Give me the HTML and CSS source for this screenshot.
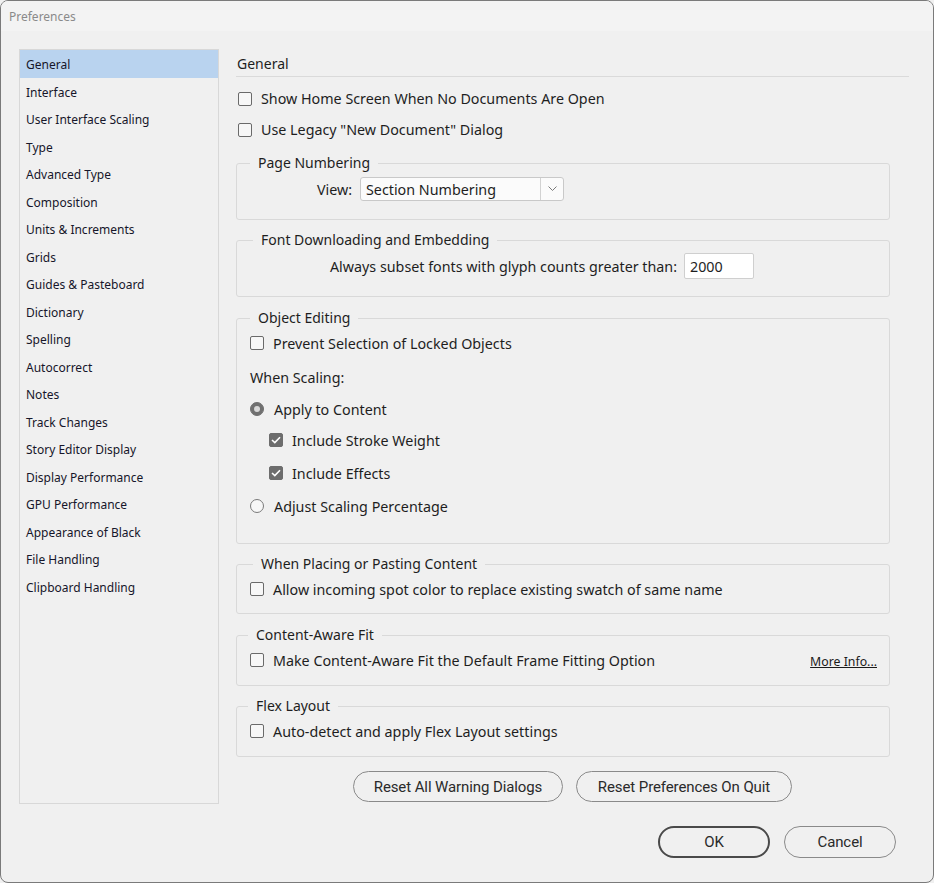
FILE: index.html
```html
<!DOCTYPE html>
<html lang="en">
<head>
<meta charset="utf-8">
<title>Preferences</title>
<link rel="stylesheet" href="styles.css">
</head>
<body>
<div class="window">
  <div class="titlebar"><span class="title">Preferences</span></div>
  <div class="body">
    <div class="content">
      <ul class="sidebar">
        <li class="item selected">General</li>
        <li class="item">Interface</li>
        <li class="item">User Interface Scaling</li>
        <li class="item">Type</li>
        <li class="item">Advanced Type</li>
        <li class="item">Composition</li>
        <li class="item">Units &amp; Increments</li>
        <li class="item">Grids</li>
        <li class="item">Guides &amp; Pasteboard</li>
        <li class="item">Dictionary</li>
        <li class="item">Spelling</li>
        <li class="item">Autocorrect</li>
        <li class="item">Notes</li>
        <li class="item">Track Changes</li>
        <li class="item">Story Editor Display</li>
        <li class="item">Display Performance</li>
        <li class="item">GPU Performance</li>
        <li class="item">Appearance of Black</li>
        <li class="item">File Handling</li>
        <li class="item">Clipboard Handling</li>
      </ul>
      <div class="main">
        <div class="heading">General</div>
        <div class="row top-row first"><span class="cb"></span><span>Show Home Screen When No Documents Are Open</span></div>
        <div class="row top-row"><span class="cb"></span><span>Use Legacy "New Document" Dialog</span></div>

        <fieldset class="group group-page">
          <legend>Page Numbering</legend>
          <div class="field-row">
            <span class="field-label label-view">View:</span>
            <div class="select">
              <span class="select-text">Section Numbering</span>
              <span class="select-btn">
                <svg width="9" height="6" viewBox="0 0 9 6"><polyline points="0.5,0.5 4.5,4.5 8.5,0.5" fill="none" stroke="#7a7a7a" stroke-width="1"/></svg>
              </span>
            </div>
          </div>
        </fieldset>

        <fieldset class="group group-font">
          <legend class="legend-shift">Font Downloading and Embedding</legend>
          <div class="field-row">
            <span class="field-label label-glyph">Always subset fonts with glyph counts greater than:</span>
            <div class="textbox">2000</div>
          </div>
        </fieldset>

        <fieldset class="group group-object">
          <legend>Object Editing</legend>
          <div class="row h30"><span class="cb"></span><span>Prevent Selection of Locked Objects</span></div>
          <div class="row h38 plain">When Scaling:</div>
          <div class="row h26 radio-row"><span class="radio on"></span><span>Apply to Content</span></div>
          <div class="row h36 indent"><span class="cb checked"><svg width="10" height="8" viewBox="0 0 10 8"><polyline points="1,4 3.8,6.6 9,1.2" fill="none" stroke="#fff" stroke-width="1.6"/></svg></span><span>Include Stroke Weight</span></div>
          <div class="row h30 indent"><span class="cb checked"><svg width="10" height="8" viewBox="0 0 10 8"><polyline points="1,4 3.8,6.6 9,1.2" fill="none" stroke="#fff" stroke-width="1.6"/></svg></span><span>Include Effects</span></div>
          <div class="row h36 radio-row"><span class="radio"></span><span>Adjust Scaling Percentage</span></div>
        </fieldset>

        <fieldset class="group group-small">
          <legend class="legend-shift">When Placing or Pasting Content</legend>
          <div class="row h30"><span class="cb"></span><span>Allow incoming spot color to replace existing swatch of same name</span></div>
        </fieldset>

        <fieldset class="group group-small gap-11">
          <legend class="legend-left">Content-Aware Fit</legend>
          <div class="row h30"><span class="cb"></span><span>Make Content-Aware Fit the Default Frame Fitting Option</span><span class="spacer"></span><span class="more-link">More Info...</span></div>
        </fieldset>

        <fieldset class="group group-small">
          <legend class="legend-left">Flex Layout</legend>
          <div class="row h30"><span class="cb"></span><span>Auto-detect and apply Flex Layout settings</span></div>
        </fieldset>

        <div class="reset-buttons">
          <button class="pill reset-a">Reset All Warning Dialogs</button>
          <button class="pill reset-b">Reset Preferences On Quit</button>
        </div>
      </div>
    </div>
    <div class="footer">
      <button class="pill dlg ok">OK</button>
      <button class="pill dlg">Cancel</button>
    </div>
  </div>
</div>
</body>
</html>
```

FILE: styles.css
```css
* { box-sizing: border-box; }

html, body {
  margin: 0;
  padding: 0;
  background: #f0f0f0;
}

body {
  font-family: "Noto Sans", "Open Sans", sans-serif;
  color: #1e1e1e;
}

.window {
  width: 934px;
  height: 883px;
  border: 1px solid #7a7a7a;
  border-radius: 8px;
  background: #f0f0f0;
  overflow: hidden;
  display: flex;
  flex-direction: column;
}

.titlebar {
  height: 30px;
  background: #f3f3f3;
  display: flex;
  align-items: center;
  padding-left: 8px;
  flex: none;
}

.title {
  font-size: 12px;
  color: #8a8a8a;
}

.body {
  padding: 18px 0 0 18px;
  display: flex;
  flex-direction: column;
}

.content {
  display: flex;
  gap: 17px;
  height: 755px;
}

/* Sidebar */
.sidebar {
  list-style: none;
  margin: 0;
  padding: 0;
  width: 200px;
  height: 755px;
  border: 1px solid #d8d8d8;
  flex: none;
}

.item {
  height: 27.5px;
  line-height: 25.5px;
  padding: 2px 0 0 6px;
  font-size: 12px;
  color: #16162a;
  white-space: nowrap;
}

.item.selected {
  background: #b9d3ef;
}

/* Main */
.main {
  width: 673px;
  display: flex;
  flex-direction: column;
  font-size: 14.3px;
}

.heading {
  font-size: 14px;
  line-height: 20px;
  padding: 5px 0 2px 1px;
  border-bottom: 1px solid #dadada;
  height: 28px;
}

.row {
  display: flex;
  align-items: center;
  gap: 9px;
  white-space: nowrap;
}

.top-row {
  height: 31px;
  padding-left: 2px;
}

.top-row.first {
  margin-top: 6px;
}

.h26 { height: 26px; }
.h30 { height: 30px; }
.h36 { height: 36px; }
.h38 { height: 38px; }

.plain { padding-left: 0; }
.indent { padding-left: 19px; }
.radio-row { gap: 10px; }

.spacer { flex: 1; }

.cb {
  width: 14px;
  height: 14px;
  border: 1px solid #6a6a6a;
  border-radius: 2px;
  background: #f7f7f7;
  flex: none;
  display: flex;
  align-items: center;
  justify-content: center;
}

.cb.checked {
  background: #6d6d6d;
  border-color: #6d6d6d;
}

.radio {
  width: 14px;
  height: 14px;
  border-radius: 50%;
  border: 1px solid #7a7a7a;
  background: #f7f7f7;
  flex: none;
  display: flex;
  align-items: center;
  justify-content: center;
}

.radio.on {
  background: #707070;
  border-color: #707070;
}

.radio.on::after {
  content: "";
  width: 6px;
  height: 6px;
  border-radius: 50%;
  background: #d9d9d9;
}

/* Groups */
.group {
  width: 654px;
  margin: 0;
  border: 1px solid #d9d9d9;
  border-radius: 3px;
  padding: 0 12px 0 13px;
  min-width: 0;
}

.group legend {
  padding: 0 8px;
  font-size: 14px;
  line-height: 20px;
}

.group legend.legend-shift { margin-left: 3px; }
.group legend.legend-left { margin-left: -2px; }

.group-page {
  margin-top: 8px;
  padding-top: 4px;
  padding-bottom: 18px;
}

.group-font {
  margin-top: 10px;
  padding-top: 3px;
  padding-bottom: 17px;
}

.group-object {
  margin-top: 11px;
  padding-bottom: 19px;
}

.group-small {
  margin-top: 10px;
  padding-bottom: 9px;
}

.group-small.gap-11 {
  margin-top: 11px;
  padding-bottom: 10px;
}

.group-small:last-of-type {
  padding-bottom: 10px;
}

.field-row {
  display: flex;
  align-items: center;
  white-space: nowrap;
}

.field-label {
  text-align: right;
  flex: none;
}

.label-view {
  width: 102px;
  margin-right: 8px;
}

.label-glyph {
  width: 427px;
  margin-right: 7px;
}

.select {
  width: 204px;
  height: 24px;
  background: #fbfbfb;
  border: 1px solid #c9c9c9;
  border-radius: 3px;
  display: flex;
  align-items: center;
}

.select-text {
  flex: 1;
  padding-left: 5px;
}

.select-btn {
  width: 23px;
  height: 100%;
  border-left: 1px solid #d2d2d2;
  display: flex;
  align-items: center;
  justify-content: center;
}

.textbox {
  width: 70px;
  height: 26px;
  background: #ffffff;
  border: 1px solid #cfcfcf;
  border-radius: 2px;
  padding-left: 5px;
  display: flex;
  align-items: center;
}

.more-link {
  font-size: 12.3px;
  text-decoration: underline;
  color: #1a1a1a;
  margin-top: 3px;
}

/* Buttons */
.pill {
  font-family: Roboto, "Liberation Sans", sans-serif;
  font-size: 15px;
  color: #2a2a2a;
  background: #f0f0f0;
  border: 1px solid #8a8a8a;
  border-radius: 16px;
  height: 31px;
  padding: 0;
  letter-spacing: -0.1px;
}

.reset-buttons {
  margin-top: 14px;
  display: flex;
  gap: 13px;
  padding-left: 117px;
}

.reset-a { width: 210px; }
.reset-b { width: 216px; }

.footer {
  margin-top: 22px;
  display: flex;
  justify-content: flex-end;
  gap: 14px;
  padding-right: 37px;
}

.dlg {
  width: 112px;
  height: 32px;
}

.dlg.ok {
  border: 2px solid #4a4a4a;
}
```
